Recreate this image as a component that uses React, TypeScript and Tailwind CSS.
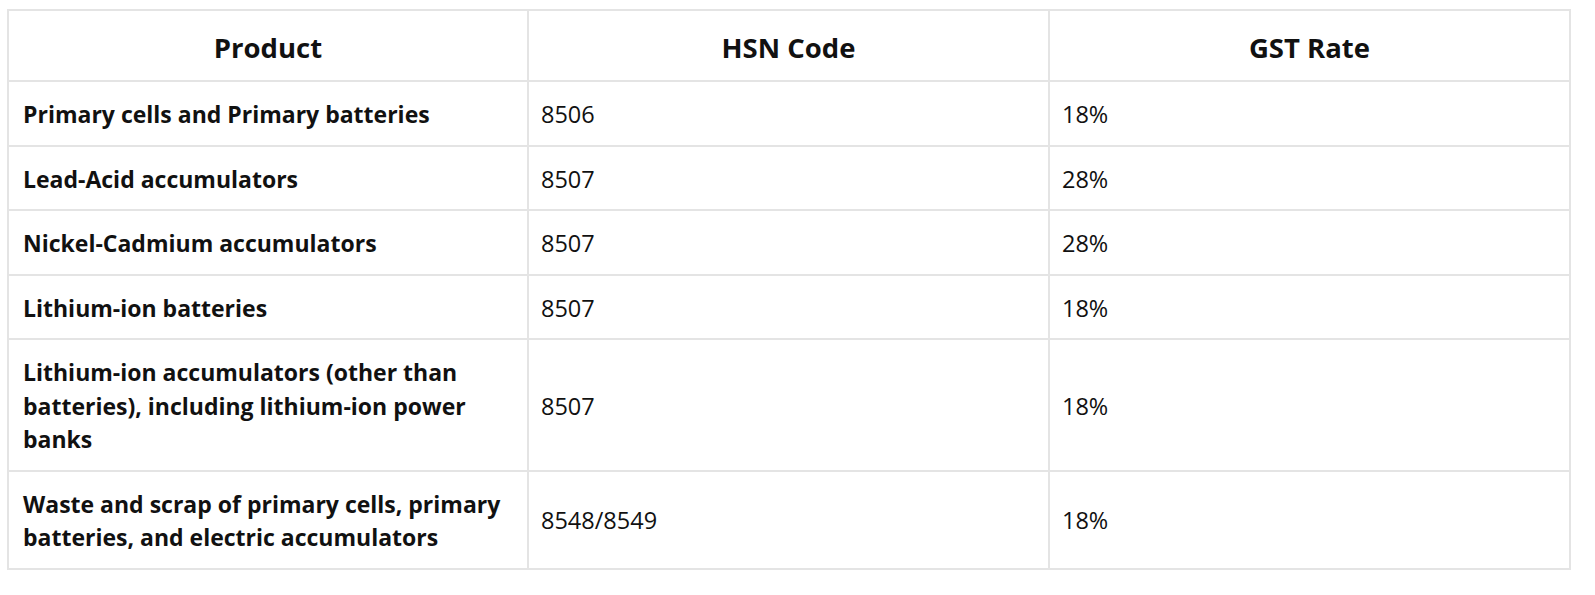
const ROWS = [
  { product: "Primary cells and Primary batteries", hsn: "8506", gst: "18%" },
  { product: "Lead-Acid accumulators", hsn: "8507", gst: "28%" },
  { product: "Nickel-Cadmium accumulators", hsn: "8507", gst: "28%" },
  { product: "Lithium-ion batteries", hsn: "8507", gst: "18%" },
  {
    product:
      "Lithium-ion accumulators (other than batteries), including lithium-ion power banks",
    hsn: "8507",
    gst: "18%",
  },
  {
    product:
      "Waste and scrap of primary cells, primary batteries, and electric accumulators",
    hsn: "8548/8549",
    gst: "18%",
  },
] as const;

export default function App() {
  return (
    <div className="min-h-[595px] bg-white pl-[7px] pt-[9px] font-['Open_Sans','Liberation_Sans',sans-serif] text-[#111]">
      <table className="w-[1562px] table-fixed border-collapse">
        <colgroup>
          <col className="w-[520px]" />
          <col className="w-[521px]" />
          <col className="w-[521px]" />
        </colgroup>
        <thead>
          <tr>
            {["Product", "HSN Code", "GST Rate"].map((h) => (
              <th
                key={h}
                className="h-[71px] border-2 border-[#e4e4e4] px-3 pt-[4px] text-center text-[27.5px] font-bold leading-[34px]"
              >
                {h}
              </th>
            ))}
          </tr>
        </thead>
        <tbody>
          {ROWS.map((r) => (
            <tr key={r.product}>
              <td className="border-2 border-[#e4e4e4] pt-[16px] pb-[13px] pl-[14px] pr-4 text-[23px] font-bold leading-[33.5px]">
                {r.product}
              </td>
              <td className="border-2 border-[#e4e4e4] pt-[16px] pb-[13px] pl-[12px] text-[23.5px] leading-[33.5px]">
                {r.hsn}
              </td>
              <td className="border-2 border-[#e4e4e4] pt-[16px] pb-[13px] pl-[12px] text-[23.5px] leading-[33.5px]">
                {r.gst}
              </td>
            </tr>
          ))}
        </tbody>
      </table>
    </div>
  );
}
